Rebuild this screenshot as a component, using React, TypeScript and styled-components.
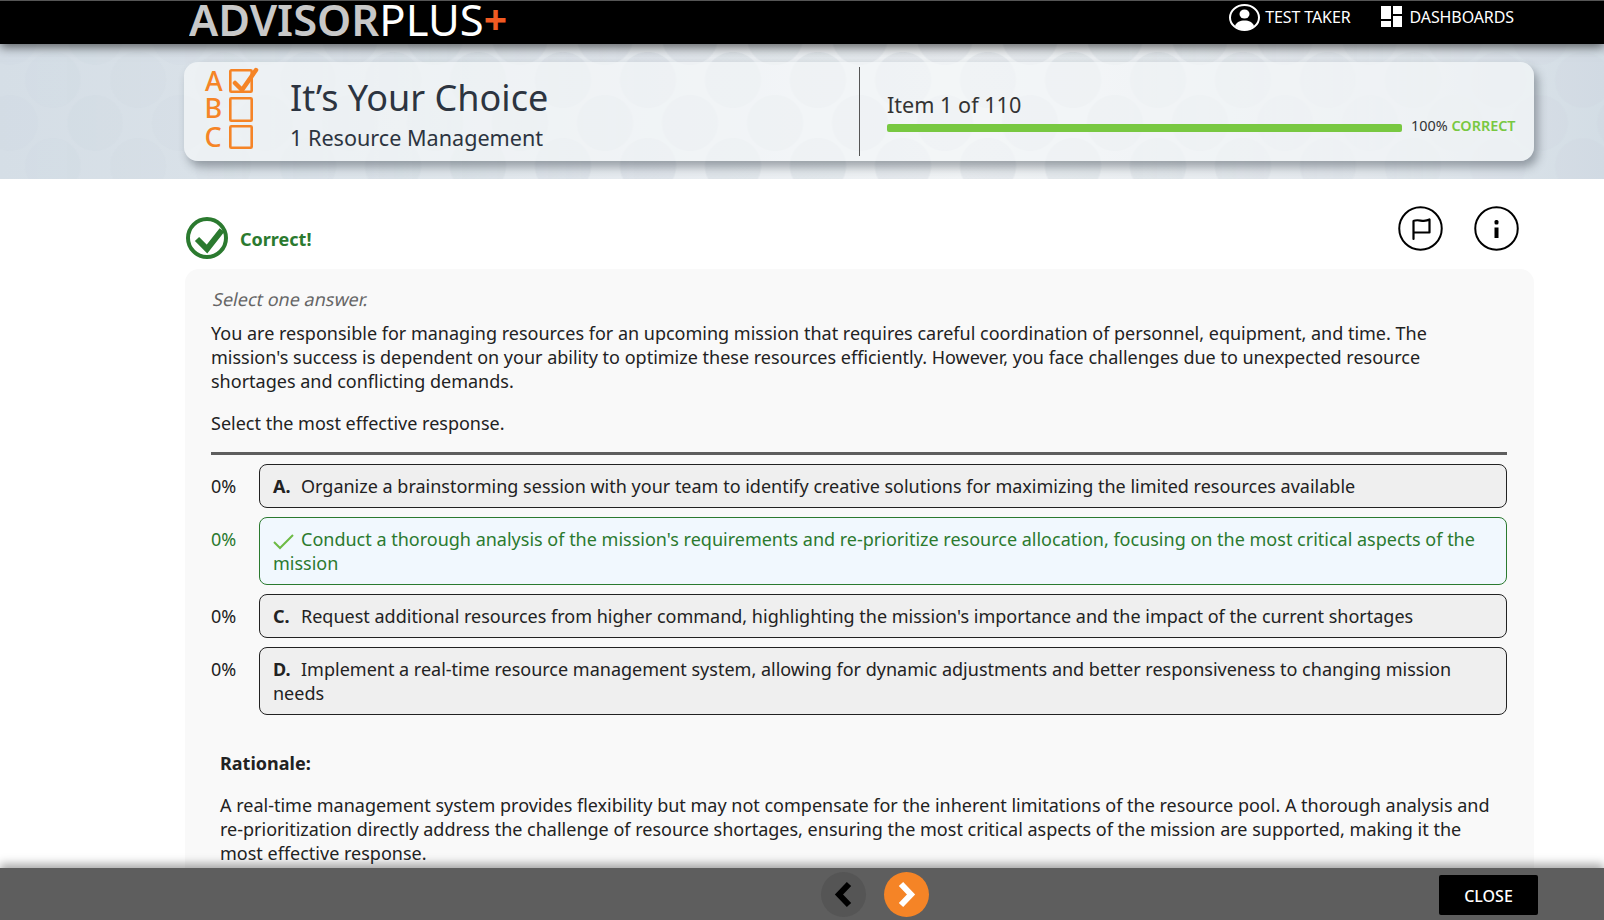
import React from "react";
import styled, { createGlobalStyle } from "styled-components";

const Global = createGlobalStyle`
  html, body { margin: 0; padding: 0; background: #fff; height: 100%; overflow: hidden; }
  body { font-family: "Noto Sans", "Open Sans", "Liberation Sans", sans-serif; color: #222; }
  #root { height: 100%; }
`;

const Page = styled.div`
  width: 1604px; height: 920px; display: flex; flex-direction: column; overflow: hidden; background: #fff;
`;
const TopBar = styled.header`
  height: 44px; flex: none; background: #000; border-top: 1px solid #555; box-sizing: border-box;
  display: flex; align-items: flex-start; padding: 0 90px 0 189px; justify-content: space-between;
  position: relative; z-index: 2; box-shadow: 0 3px 10px rgba(0,0,0,.6);
`;
const Logo = styled.div`
  font-size: 43.5px; line-height: 36px; color: #fff; display: flex; height: 36px; overflow: hidden;
`;
const LogoStrong = styled.span` color: #c8c8c8; font-weight: 600; `;
const LogoPlus = styled.span` color: #f15a22; font-weight: 700; font-size: 41px; `;
const UserNav = styled.nav` display: flex; gap: 30px; margin-top: 1px; align-items: center; `;
const NavItem = styled.span<{ $gap: number }>`
  display: flex; align-items: center; gap: ${p => p.$gap}px; color: #fff; font-size: 16px; line-height: 28px; letter-spacing: -.1px;
`;
const Banner = styled.section`
  height: 135px; flex: none; box-sizing: border-box; padding: 18px 70px 18px 184px; position: relative;
  background: linear-gradient(90deg, #d5dee6 0%, #dde4ea 25%, #e9edf1 45%, #f0f3f5 60%, #e2e7ec 85%, #d3dde5 100%);
  &::before {
    content: ""; position: absolute; inset: 0;
    background:
      radial-gradient(circle at center, rgba(150,165,180,.13) 0 27.500px, transparent 28.500px) 605.5px -7px / 85px 86px,
      radial-gradient(circle at center, rgba(150,165,180,.13) 0 27.500px, transparent 28.500px) 647.5px 36px / 85px 86px;
    -webkit-mask-image: linear-gradient(90deg, rgba(0,0,0,.15) 0%, rgba(0,0,0,.2) 12%, #000 40%, #000 70%, rgba(0,0,0,.2) 92%);
    mask-image: linear-gradient(90deg, rgba(0,0,0,.15) 0%, rgba(0,0,0,.2) 12%, #000 40%, #000 70%, rgba(0,0,0,.2) 92%);
  }
`;
const BannerCard = styled.div`
  height: 99px; box-sizing: border-box; border-radius: 14px; display: flex; align-items: stretch; position: relative;
  background: rgba(244,246,248,.72); box-shadow: 4px 6px 10px rgba(50,60,70,.42); padding: 5px 0;
`;
const TitleBlock = styled.div` width: 676px; flex: none; display: flex; box-sizing: border-box; padding: 0 0 0 16px; border-right: 1px solid #555; `;
const TitleText = styled.div` margin-left: 30px; padding-top: 5px; color: #2c3440; `;
const Title = styled.div` font-size: 36px; line-height: 52px; `;
const Subtitle = styled.div` font-size: 21.6px; line-height: 29px; margin-top: -1px; `;
const ProgressBlock = styled.div` flex: 1; padding: 23px 14px 0 27px; color: #333; `;
const ItemCount = styled.div` font-size: 21.6px; line-height: 30px; `;
const ProgressRow = styled.div` display: flex; align-items: flex-start; gap: 9px; margin-top: -4px; `;
const Track = styled.div` width: 515px; flex: none; height: 8px; margin-top: 8px; border-radius: 2px; background: #78c841; `;
const ProgressLabel = styled.div` font-size: 14.4px; line-height: 20px; white-space: nowrap; `;
const ProgressGreen = styled.b` color: #78c841; font-weight: 600; `;

const Main = styled.main` flex: 1; min-height: 0; overflow: hidden; padding: 0 70px 0 185px; position: relative; `;
const StatusRow = styled.div` height: 90px; display: flex; justify-content: space-between; box-sizing: border-box; padding-top: 38px; `;
const Verdict = styled.div` display: flex; align-items: center; gap: 12px; height: 42px; margin-left: 1px; font-size: 18px; font-weight: 700; color: #2b7a2f; `;
const VerdictText = styled.span` margin-top: 2px; `;
const Tools = styled.div` display: flex; gap: 31px; margin-top: -11px; padding-right: 15px; `;
const RoundTool = styled.button`
  width: 45px; height: 45px; border: 0; background: transparent; padding: 0; display: block;
`;
const Panel = styled.div`
  background: #f9f9f9; border-radius: 14px 14px 0 0; padding: 18px 27px 0 26px; height: 700px; box-sizing: border-box;
  font-size: 18px; line-height: 24px; color: #222;
`;
const Hint = styled.div` color: #666; transform: skewX(-12deg); transform-origin: left bottom; `;
const Stem = styled.p` margin: 10px 0 18px; `;
const Lead = styled.p` margin: 0 0 17px; `;
const Rule = styled.hr` border: 0; height: 3px; background: #5e5e5e; margin: 0 0 9px 0; `;
const Answers = styled.div` display: flex; flex-direction: column; gap: 9px; `;
const AnswerRow = styled.div<{ $ok?: boolean }>`
  display: grid; grid-template-columns: 48px 1fr; color: ${p => (p.$ok ? "#2b7a2f" : "#222")};
`;
const Pct = styled.div` padding-top: 10px; `;
const AnswerBox = styled.div<{ $ok?: boolean }>`
  border: 1px solid ${p => (p.$ok ? "#2b7a2f" : "#222")}; border-radius: 8px;
  background: ${p => (p.$ok ? "#f1f8fe" : "#efefef")}; padding: 9px 13px;
`;
const AnswerLetter = styled.b` font-weight: 700; display: inline-block; width: 28px; color: #222; `;
const TickSlot = styled.span` display: inline-block; width: 28px; vertical-align: -4px; line-height: 0; `;
const Rationale = styled.div` padding: 36px 9px 0; `;
const RationaleHead = styled.div` font-weight: 700; margin-bottom: 18px; `;
const RationaleBody = styled.p` margin: 0; `;

const Footer = styled.footer`
  height: 52px; flex: none; background: #5e5e5e; position: relative; z-index: 2; box-sizing: border-box;
  box-shadow: 0 -4px 9px rgba(0,0,0,.35); display: grid; grid-template-columns: 1fr auto 1fr; align-items: center; padding: 0 66px 0 212px;
`;
const Pager = styled.div` display: flex; gap: 18px; grid-column: 2; `;
const PageBtn = styled.button<{ $on?: boolean }>`
  width: 45px; height: 45px; border-radius: 50%; border: 0; padding: 0; display: flex; align-items: center; justify-content: center;
  background: ${p => (p.$on ? "#f58426" : "#555")};
`;
const CloseBtn = styled.button`
  justify-self: end; width: 99px; height: 40px; margin-top: 1px; background: #000; color: #fff; border: 0; border-radius: 2px;
  font: 500 16px/40px "Noto Sans", sans-serif;
`;

const AbcIcon = () => (
  <svg width="60" height="90" viewBox="0 0 60 90" style={{ flex: "none" }}>
    <g fill="none" stroke="#f58426" strokeWidth="2.6">
      <rect x="30.300" y="3.300" width="21.400" height="21.400" rx="1" />
      <rect x="30.300" y="31.300" width="21.400" height="22.400" rx="1" />
      <rect x="30.300" y="59.300" width="21.400" height="21.400" rx="1" />
    </g>
    <path d="M35 16l7 7L56 3" fill="none" stroke="#f58426" strokeWidth="4.5" strokeLinecap="round" strokeLinejoin="round" />
    <g fill="#f58426" fontFamily="Noto Sans" fontSize="27" fontWeight="500">
      <text x="5" y="24">A</text>
      <text x="4.500" y="51">B</text>
      <text x="4.500" y="80">C</text>
    </g>
  </svg>
);

export default function App() {
  return (
    <Page>
      <Global />
      <TopBar>
        <Logo><LogoStrong>ADVISOR</LogoStrong>PLUS<LogoPlus>+</LogoPlus></Logo>
        <UserNav>
          <NavItem $gap={5}>
            <svg width="31" height="27" viewBox="0 0 31 27" style={{ marginTop: 2 }}>
              <ellipse cx="15.500" cy="13.500" rx="14.500" ry="12.500" fill="#000" stroke="#fff" strokeWidth="2" />
              <ellipse cx="15.500" cy="10" rx="5" ry="4.500" fill="#fff" />
              <path d="M6 22c1.500-4 5-5.500 9.500-5.500s8 1.500 9.500 5.500c-2.500 2.500-6 3.500-9.500 3.500S8.500 24.500 6 22z" fill="#fff" />
            </svg>
            TEST TAKER
          </NavItem>
          <NavItem $gap={8}>
            <svg width="21" height="21" viewBox="0 0 21 21">
              <g fill="#fff">
                <rect x="0" y="0" width="10" height="13" />
                <rect x="12" y="0" width="9" height="8" />
                <rect x="0" y="15" width="10" height="6" />
                <rect x="12" y="10" width="9" height="11" />
              </g>
            </svg>
            DASHBOARDS
          </NavItem>
        </UserNav>
      </TopBar>
      <Banner>
        <BannerCard>
          <TitleBlock>
            <AbcIcon />
            <TitleText>
              <Title>It’s Your Choice</Title>
              <Subtitle>1 Resource Management</Subtitle>
            </TitleText>
          </TitleBlock>
          <ProgressBlock>
            <ItemCount>Item 1 of 110</ItemCount>
            <ProgressRow>
              <Track />
              <ProgressLabel>100% <ProgressGreen>CORRECT</ProgressGreen></ProgressLabel>
            </ProgressRow>
          </ProgressBlock>
        </BannerCard>
      </Banner>
      <Main>
        <StatusRow>
          <Verdict>
            <svg width="42" height="42" viewBox="0 0 42 42">
              <circle cx="21" cy="21" r="19" fill="none" stroke="#2b7a2f" strokeWidth="4" />
              <path d="M11 22l10 10L36 13" fill="none" stroke="#2b7a2f" strokeWidth="6" />
            </svg>
            <VerdictText>Correct!</VerdictText>
          </Verdict>
          <Tools>
            <RoundTool aria-label="Flag">
              <svg width="45" height="45" viewBox="0 0 45 45" fill="none" stroke="#000">
                <circle cx="22.500" cy="22.500" r="21.250" strokeWidth="2" />
                <path d="M15.500 33V15c5-2.500 10 2 16-1.500V26.500H15.500" strokeWidth="2.200" strokeLinecap="round" strokeLinejoin="round" />
              </svg>
            </RoundTool>
            <RoundTool aria-label="Info">
              <svg width="45" height="45" viewBox="0 0 45 45">
                <circle cx="22.500" cy="22.500" r="21.250" fill="none" stroke="#000" strokeWidth="2" />
                <rect x="20.500" y="14" width="4" height="4.500" rx="1.500" fill="#000" />
                <rect x="20.500" y="21.500" width="4" height="10.500" fill="#000" />
              </svg>
            </RoundTool>
          </Tools>
        </StatusRow>
        <Panel>
          <Hint>Select one answer.</Hint>
          <Stem>You are responsible for managing resources for an upcoming mission that requires careful coordination of personnel, equipment, and time. The mission's success is dependent on your ability to optimize these resources efficiently. However, you face challenges due to unexpected resource shortages and conflicting demands.</Stem>
          <Lead>Select the most effective response.</Lead>
          <Rule />
          <Answers>
            <AnswerRow>
              <Pct>0%</Pct>
              <AnswerBox><AnswerLetter>A.</AnswerLetter>Organize a brainstorming session with your team to identify creative solutions for maximizing the limited resources available</AnswerBox>
            </AnswerRow>
            <AnswerRow $ok>
              <Pct>0%</Pct>
              <AnswerBox $ok>
                <TickSlot>
                  <svg width="21" height="16" viewBox="0 0 21 16" fill="none" stroke="#6dbb45" strokeWidth="2">
                    <path d="M1 8l6 6L20 1" />
                  </svg>
                </TickSlot>
                Conduct a thorough analysis of the mission's requirements and re-prioritize resource allocation, focusing on the most critical aspects of the mission
              </AnswerBox>
            </AnswerRow>
            <AnswerRow>
              <Pct>0%</Pct>
              <AnswerBox><AnswerLetter>C.</AnswerLetter>Request additional resources from higher command, highlighting the mission's importance and the impact of the current shortages</AnswerBox>
            </AnswerRow>
            <AnswerRow>
              <Pct>0%</Pct>
              <AnswerBox><AnswerLetter>D.</AnswerLetter>Implement a real-time resource management system, allowing for dynamic adjustments and better responsiveness to changing mission needs</AnswerBox>
            </AnswerRow>
          </Answers>
          <Rationale>
            <RationaleHead>Rationale:</RationaleHead>
            <RationaleBody>A real-time management system provides flexibility but may not compensate for the inherent limitations of the resource pool. A thorough analysis and re-prioritization directly address the challenge of resource shortages, ensuring the most critical aspects of the mission are supported, making it the most effective response.</RationaleBody>
          </Rationale>
        </Panel>
      </Main>
      <Footer>
        <Pager>
          <PageBtn aria-label="Previous">
            <svg width="19" height="27" viewBox="0 0 19 27" fill="none" stroke="#000" strokeWidth="6">
              <path d="M15 3L5 13.500 15 24" />
            </svg>
          </PageBtn>
          <PageBtn $on aria-label="Next">
            <svg width="19" height="27" viewBox="0 0 19 27" fill="none" stroke="#fff" strokeWidth="6">
              <path d="M4 3l10 10.500L4 24" />
            </svg>
          </PageBtn>
        </Pager>
        <CloseBtn>CLOSE</CloseBtn>
      </Footer>
    </Page>
  );
}
